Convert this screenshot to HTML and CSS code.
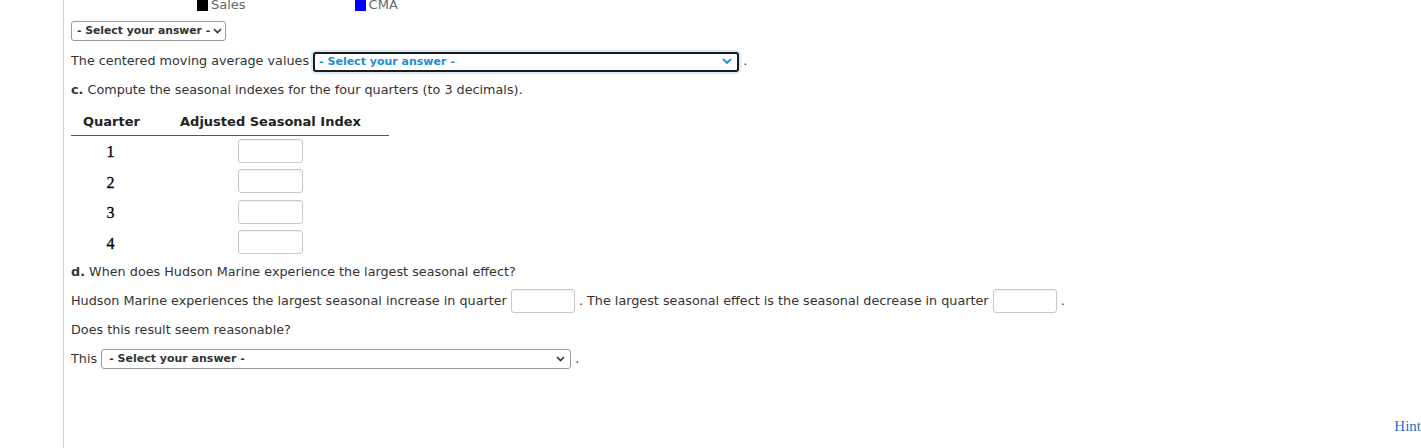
FILE: index.html
```
<!DOCTYPE html>
<html>
<head>
<meta charset="utf-8">
<link rel="stylesheet" href="styles.css">
</head>
<body>
<div class="page">
  <div class="legend">
    <span class="legend-item"><span class="swatch swatch-black"></span>Sales</span>
    <span class="legend-item legend-cma"><span class="swatch swatch-blue"></span>CMA</span>
  </div>
  <div class="first-select-row">
    <span class="dropdown dropdown-small">
      <span class="dropdown-text">- Select your answer -</span>
      <svg class="chev" width="9" height="6" viewBox="0 0 9 6"><path d="M1 1 L4.5 4.5 L8 1" fill="none" stroke="#333" stroke-width="1.6"/></svg>
    </span>
  </div>
  <p class="line">The centered moving average values <span class="dropdown dropdown-focus">
      <span class="dropdown-text">- Select your answer -</span>
      <svg class="chev" width="10" height="7" viewBox="0 0 10 7"><path d="M1 1 L5 5 L9 1" fill="none" stroke="#1a8fd6" stroke-width="1.8"/></svg>
    </span> .</p>
  <p class="line"><b>c.</b> Compute the seasonal indexes for the four quarters (to 3 decimals).</p>
  <div class="index-table">
    <div class="th col-q">Quarter</div>
    <div class="th col-a">Adjusted Seasonal Index</div>
    <div class="num">1</div><div class="cell"><span class="box"></span></div>
    <div class="num">2</div><div class="cell"><span class="box"></span></div>
    <div class="num">3</div><div class="cell"><span class="box"></span></div>
    <div class="num">4</div><div class="cell"><span class="box"></span></div>
  </div>
  <p class="line"><b>d.</b> When does Hudson Marine experience the largest seasonal effect?</p>
  <p class="line">Hudson Marine experiences the largest seasonal increase in quarter <span class="box box-inline"></span> . The largest seasonal effect is the seasonal decrease in quarter <span class="box box-inline"></span> .</p>
  <p class="line">Does this result seem reasonable?</p>
  <p class="line">This <span class="dropdown dropdown-wide">
      <span class="dropdown-text">- Select your answer -</span>
      <svg class="chev" width="9" height="6" viewBox="0 0 9 6"><path d="M1 1 L4.5 4.5 L8 1" fill="none" stroke="#333" stroke-width="1.6"/></svg>
    </span> .</p>
  <div class="hint-row"><a class="hint" href="#">Hint</a></div>
</div>
</body>
</html>
```
FILE: styles.css
```
html, body {
  margin: 0;
  padding: 0;
  background: #fff;
}
body {
  font-family: "DejaVu Sans", Verdana, sans-serif;
  font-size: 12.78px;
  color: #333;
}
.page {
  margin-left: 63px;
  border-left: 1px solid #d0d0d0;
  padding-left: 7px;
  height: 448px;
  overflow: hidden;
  box-sizing: border-box;
}
.legend {
  height: 16px;
  margin-top: -3px;
  display: flex;
  align-items: center;
  padding-left: 126px;
  font-size: 13px;
  color: #666;
  line-height: 16px;
}
.legend-item {
  display: inline-flex;
  align-items: center;
}
.legend-cma {
  margin-left: 109px;
}
.swatch {
  display: inline-block;
  width: 11px;
  height: 11px;
  margin-right: 3px;
  margin-top: 1px;
}
.swatch-black { background: #000; }
.swatch-blue { background: #0000ff; }
.first-select-row {
  margin-top: 8px;
  height: 25px;
}
.dropdown {
  display: inline-flex;
  align-items: center;
  justify-content: space-between;
  box-sizing: border-box;
  height: 20px;
  border: 1px solid #9a9a9a;
  border-radius: 3px;
  background: #fff;
  padding: 0 4px 0 6px;
  font-size: 11px;
  font-weight: bold;
  color: #333;
  vertical-align: middle;
  line-height: 18px;
  white-space: nowrap;
}
.dropdown-text {
  flex: none;
  white-space: nowrap;
}
.dropdown-small {
  width: 155px;
  padding-left: 5px;
  padding-right: 3px;
  font-size: 10.8px;
}
.dropdown-focus {
  width: 426px;
  border: 2px solid #1b1b1b;
  color: #1a8fd6;
  box-shadow: 0 0 0 2px #d6ecfa;
  padding-left: 4px;
  padding-right: 5px;
}
.dropdown-wide {
  width: 470px;
  padding-left: 7px;
  padding-right: 5px;
}
.chev {
  display: block;
  flex: none;
}
.line {
  margin: 0;
  height: 29px;
  line-height: 29px;
  white-space: nowrap;
}
.line b {
  font-weight: bold;
}
.index-table {
  display: grid;
  grid-template-columns: 81px 237px;
  grid-template-rows: 32px repeat(4, 30.67px);
  width: 318px;
  margin-bottom: -2px;
}
.th {
  font-weight: bold;
  font-size: 13px;
  line-height: 15px;
  padding: 10px 0 6px;
  border-bottom: 1.5px solid #555;
  text-align: center;
  color: #222;
}
.num {
  text-align: center;
  font-family: "Liberation Serif", "Times New Roman", serif;
  font-size: 16px;
  line-height: 31px;
  color: #000;
  padding-right: 2px;
  -webkit-text-stroke: 0.3px #000;
}
.cell {
  text-align: center;
}
.cell .box {
  margin-top: 2.5px;
}
.box {
  display: inline-block;
  width: 65px;
  height: 24px;
  box-sizing: border-box;
  border: 1px solid #c8c8c8;
  border-radius: 3px;
  background: #fff;
  box-shadow: inset 0 1px 1px rgba(0,0,0,0.06);
  vertical-align: middle;
}
.box-inline {
  width: 64px;
}
.hint-row {
  margin-top: 43px;
  text-align: right;
  line-height: 20px;
}
.hint {
  font-family: "Liberation Serif", "Times New Roman", serif;
  font-size: 15px;
  color: #1a73c9;
  text-decoration: none;
}
```
